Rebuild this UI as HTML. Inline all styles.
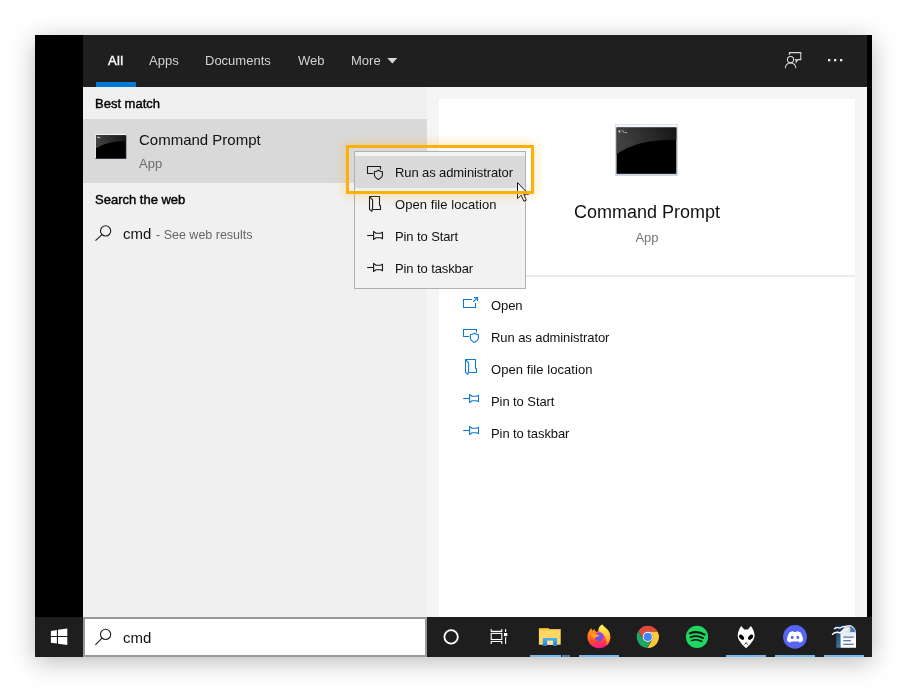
<!DOCTYPE html>
<html lang="en">
<head>
<meta charset="utf-8">
<title>Command Prompt - Run as administrator</title>
<style>
html,body{margin:0;padding:0;}
body{width:906px;height:692px;background:#fff;overflow:hidden;position:relative;font-family:"Liberation Sans",sans-serif;}
.abs{position:absolute;}
#win{position:absolute;left:35px;top:35px;width:837px;height:622px;background:#000;box-shadow:0 5px 24px rgba(0,0,0,.27);}
#header{position:absolute;left:83px;top:35px;width:784px;height:52px;background:#1f1f1f;}
#leftp{position:absolute;left:83px;top:87px;width:344px;height:530px;background:#f0f0f0;}
#rightbg{position:absolute;left:427px;top:87px;width:440px;height:530px;background:#f5f5f5;}
#card{position:absolute;left:439px;top:99px;width:416px;height:518px;background:#fff;}
#taskbar{position:absolute;left:35px;top:617px;width:837px;height:40px;background:#1e1e1e;}
#sbox{position:absolute;left:83px;top:617px;width:340px;height:36px;background:#fff;border:2px solid #999;}
.t{position:absolute;white-space:nowrap;line-height:20px;height:20px;will-change:transform;}
.nav{font-size:13px;color:#d2d2d2;top:51px;}
.sb{-webkit-text-stroke:0.4px currentColor;}
#selrow{position:absolute;left:83px;top:119px;width:344px;height:64px;background:#d9d9d9;}
#menu{position:absolute;left:354px;top:151px;width:170px;height:136px;background:#f2f2f2;border:1px solid #b0b0b0;}
#mhl{position:absolute;left:355px;top:156px;width:170px;height:31.6px;background:#dadada;}
.mi{font-size:13px;color:#111;left:395px;letter-spacing:-0.1px;}
.ai{font-size:13px;color:#111;left:491px;letter-spacing:-0.08px;}
#obox{position:absolute;left:346px;top:145px;width:182px;height:43px;border:3px solid #fdb00a;box-shadow:0 0 11px rgba(253,176,10,.40);}
.ul{position:absolute;top:655px;height:2px;background:#76b9ed;}
svg{position:absolute;overflow:visible;}
</style>
</head>
<body>
<div id="win"></div>
<div id="header"></div>
<div id="leftp"></div>
<div id="rightbg"></div>
<div id="card"></div>
<div id="taskbar"></div>
<div id="sbox"></div>

<!-- header tabs -->
<div class="t nav sb" id="n1" style="left:108px;color:#fff;letter-spacing:0.3px;">All</div>
<div class="abs" style="left:96px;top:82px;width:40px;height:5px;background:#0078d7;"></div>
<div class="t nav" id="n2" style="left:149px;">Apps</div>
<div class="t nav" id="n3" style="left:205px;">Documents</div>
<div class="t nav" id="n4" style="left:298px;">Web</div>
<div class="t nav" id="n5" style="left:351px;">More</div>
<svg style="left:387px;top:58px;" width="11" height="6" viewBox="0 0 11 6"><path d="M0.3,0 H10.3 L5.3,5.4 Z" fill="#d8d8d8"/></svg>

<!-- left panel -->
<div class="t sb" id="l1" style="left:95px;top:94px;font-size:13px;color:#000;">Best match</div>
<div id="selrow"></div>
<div class="t" id="l2" style="left:139px;top:130px;font-size:15px;color:#111;">Command Prompt</div>
<div class="t" id="l3" style="left:139px;top:154px;font-size:13px;color:#6d6d6d;">App</div>
<div class="t sb" id="l4" style="left:95px;top:190px;font-size:13px;color:#000;">Search the web</div>
<div class="t" id="l5" style="left:123px;top:224px;font-size:15px;color:#111;">cmd</div>
<div class="t" id="l6" style="left:156px;top:225px;font-size:12.5px;color:#666;">- See web results</div>

<!-- card -->
<div class="t" id="c1" style="left:439px;width:416px;text-align:center;top:199px;height:26px;line-height:26px;font-size:18px;color:#111;">Command Prompt</div>
<div class="t" id="c2" style="left:439px;width:416px;text-align:center;top:228px;font-size:13px;color:#767676;">App</div>
<div class="abs" style="left:439px;top:275px;width:416px;height:2px;background:#ececec;"></div>
<div class="t ai" id="a1" style="top:296px;">Open</div>
<div class="t ai" id="a2" style="top:328px;">Run as administrator</div>
<div class="t ai" id="a3" style="top:360px;letter-spacing:0.06px;">Open file location</div>
<div class="t ai" id="a4" style="top:392px;">Pin to Start</div>
<div class="t ai" id="a5" style="top:424px;">Pin to taskbar</div>

<!-- context menu -->
<div id="menu"></div>
<div id="mhl"></div>
<div class="t mi" id="m1" style="top:163px;">Run as administrator</div>
<div class="t mi" id="m2" style="top:195px;letter-spacing:0.06px;">Open file location</div>
<div class="t mi" id="m3" style="top:227px;">Pin to Start</div>
<div class="t mi" id="m4" style="top:259px;">Pin to taskbar</div>

<!-- taskbar -->
<div class="t" id="s1" style="left:123px;top:628px;font-size:15px;color:#111;">cmd</div>
<div class="ul" style="left:530px;width:31px;"></div>
<div class="ul" style="left:562px;width:8px;background:#4f7fa8;"></div>
<div class="ul" style="left:579px;width:40px;"></div>
<div class="ul" style="left:726px;width:40px;"></div>
<div class="ul" style="left:775px;width:40px;"></div>
<div class="ul" style="left:824px;width:40px;"></div>

<svg id="icons" style="left:0;top:0;" width="906" height="692" viewBox="0 0 906 692">
<defs>
<linearGradient id="gl" x1="0" y1="0.2" x2="1" y2="0"><stop offset="0" stop-color="#414141"/><stop offset="1" stop-color="#151515"/></linearGradient>
<linearGradient id="gblue" x1="0" y1="0" x2="0" y2="1"><stop offset="0" stop-color="#4fb2ef"/><stop offset="1" stop-color="#1c80d6"/></linearGradient>
<linearGradient id="gff" x1="0.35" y1="0" x2="0.5" y2="1"><stop offset="0" stop-color="#ffb52a"/><stop offset="0.35" stop-color="#ff8418"/><stop offset="0.72" stop-color="#ff4332"/><stop offset="0.92" stop-color="#ff1f7e"/><stop offset="1" stop-color="#f0158f"/></linearGradient>
<linearGradient id="gfl" x1="0.2" y1="0" x2="0.5" y2="1"><stop offset="0" stop-color="#fff45a"/><stop offset="0.55" stop-color="#ffd03a"/><stop offset="0.85" stop-color="#ffa325"/><stop offset="1" stop-color="#ff7a1c"/></linearGradient>
<radialGradient id="gpu" cx="0.42" cy="0.62" r="0.65"><stop offset="0" stop-color="#6458f2"/><stop offset="0.6" stop-color="#8446ee"/><stop offset="1" stop-color="#b03be6"/></radialGradient>
<linearGradient id="goo" x1="0" y1="0" x2="0" y2="1"><stop offset="0" stop-color="#10304f"/><stop offset="0.5" stop-color="#2a5680"/><stop offset="1" stop-color="#3f75a6"/></linearGradient>
<linearGradient id="gpage" x1="0" y1="0" x2="0" y2="1"><stop offset="0" stop-color="#bccbda"/><stop offset="0.35" stop-color="#e6ecf2"/><stop offset="0.7" stop-color="#fbfcfd"/><stop offset="1" stop-color="#ffffff"/></linearGradient>
</defs>

<!-- header icons -->
<g fill="none" stroke="#dcdcdc" stroke-width="1.05">
<circle cx="790.5" cy="59.5" r="3.1"/>
<path d="M785.3,68.2 A5.3,5.3 0 0 1 795.9,68.2"/>
<path d="M789.4,55 V52.6 H800.8 V59.6 H797.8 L796.2,62 V59.6 H794.9"/>
</g>
<g fill="#e8e8e8"><rect x="828" y="59" width="2.3" height="2.3"/><rect x="834" y="59" width="2.3" height="2.3"/><rect x="840" y="59" width="2.3" height="2.3"/></g>

<!-- small cmd icon -->
<rect x="95" y="134" width="31.4" height="25" fill="#474e5c"/>
<rect x="95" y="134" width="31.4" height="1.4" fill="#f4f6f9"/>
<rect x="95" y="134" width="1" height="24.4" fill="#e3e8f0"/>
<rect x="96" y="135.4" width="29.7" height="22.9" fill="#000"/>
<path d="M96,135.4 H125.5 V141 Q108,141 96,148.2 Z" fill="url(#gl)"/>
<rect x="97.3" y="136.8" width="1.6" height="1.2" fill="#ddd"/><rect x="99" y="137.4" width="1.8" height="0.8" fill="#bbb"/>

<!-- big cmd icon -->
<rect x="615.1" y="124.1" width="62.8" height="51.8" fill="#cdd5e2"/>
<rect x="615.8" y="124.6" width="61.4" height="2.6" fill="#f3f6fa"/>
<rect x="616.6" y="127.6" width="59.7" height="46.2" fill="#000"/>
<path d="M616.6,127.6 H676.3 V139.8 Q638,139 616.6,154.2 Z" fill="url(#gl)"/>
<g fill="#d8d8d8"><rect x="618.6" y="130.3" width="1.4" height="2.2"/><rect x="620.6" y="130.5" width="0.8" height="0.7"/><rect x="620.6" y="131.8" width="0.8" height="0.7"/><path d="M622,130.3 l0.8,0 l2,2.4 l-0.8,0 z"/><rect x="624.8" y="132.4" width="2.4" height="0.7"/></g>

<!-- search icons -->
<g fill="none" stroke="#1c1c1c" stroke-width="1.1">
<circle cx="105.6" cy="230.9" r="5.1"/><path d="M102,234.6 L95.5,240.7"/>
<circle cx="105.6" cy="634.4" r="5.1"/><path d="M102,638.1 L95.4,644.8"/>
</g>

<!-- action icons (blue) -->
<g stroke="#0f79d6">
<g fill="none" stroke-width="1.1"><path d="M472.2,299.5 H463.5 V307.5 H475.5 V303"/><path d="M473.2,301.9 L477.3,297.8"/><path d="M474,297.6 H477.5 V301.1" /></g>
<g fill="none" stroke-width="1.1"><path d="M476.5,332.6 V329.5 H463.5 V336.5 H469.2"/><path d="M470.4,334.7 Q472.6,334.5 474.4,333.2 Q476.2,334.5 478.4,334.7 V337.8 Q478.4,340.6 474.4,342.5 Q470.4,340.6 470.4,337.8 Z"/></g>
<g fill="none" stroke-width="1.1" stroke-linejoin="round"><path d="M465.5,359.5 H475.5 V368.2 L476.5,368.7 V372.5 H468.6"/><path d="M465.5,359.5 L468.6,362.8 V370.3 L467.9,374.4 L465.5,372.4 Z"/></g>
<g fill="none" stroke-width="1.1" stroke-linejoin="round"><path d="M463.2,398.5 H469.6"/><path d="M469.6,394.4 L472,396.2 H476.6 L478.5,395.2 V401.8 L476.6,400.8 H472 L469.6,402.6 Z"/></g>
<g fill="none" stroke-width="1.1" stroke-linejoin="round" transform="translate(0,32)"><path d="M463.2,398.5 H469.6"/><path d="M469.6,394.4 L472,396.2 H476.6 L478.5,395.2 V401.8 L476.6,400.8 H472 L469.6,402.6 Z"/></g>
</g>
<!-- menu icons (dark) -->
<g stroke="#1a1a1a" transform="translate(-96,-163)">
<g fill="none" stroke-width="1.1"><path d="M476.5,332.6 V329.5 H463.5 V336.5 H469.2"/><path d="M470.4,334.7 Q472.6,334.5 474.4,333.2 Q476.2,334.5 478.4,334.7 V337.8 Q478.4,340.6 474.4,342.5 Q470.4,340.6 470.4,337.8 Z"/></g>
<g fill="none" stroke-width="1.1" stroke-linejoin="round"><path d="M465.5,359.5 H475.5 V368.2 L476.5,368.7 V372.5 H468.6"/><path d="M465.5,359.5 L468.6,362.8 V370.3 L467.9,374.4 L465.5,372.4 Z"/></g>
<g fill="none" stroke-width="1.1" stroke-linejoin="round"><path d="M463.2,398.5 H469.6"/><path d="M469.6,394.4 L472,396.2 H476.6 L478.5,395.2 V401.8 L476.6,400.8 H472 L469.6,402.6 Z"/></g>
<g fill="none" stroke-width="1.1" stroke-linejoin="round" transform="translate(0,32)"><path d="M463.2,398.5 H469.6"/><path d="M469.6,394.4 L472,396.2 H476.6 L478.5,395.2 V401.8 L476.6,400.8 H472 L469.6,402.6 Z"/></g>
</g>

<!-- windows logo -->
<g fill="#fff">
<path d="M50.9,630.9 L56.9,630 V635.9 H50.9 Z"/>
<path d="M58,629.8 L67.3,628.5 V635.9 H58 Z"/>
<path d="M50.9,636.9 H56.9 V643.6 L50.9,642.7 Z"/>
<path d="M58,636.9 H67.3 V645.1 L58,643.8 Z"/>
</g>
<!-- cortana -->
<circle cx="451.1" cy="636.9" r="6.7" fill="none" stroke="#fff" stroke-width="1.8"/>
<!-- task view -->
<g fill="none" stroke="#fff" stroke-width="1.1">
<path d="M491.2,629 V631.4 H501.8 V629"/>
<rect x="491.2" y="633.4" width="10.6" height="6.1"/>
<path d="M491.2,644 V641.5 H501.8 V644"/>
<path d="M505.6,629 V631.9 M505.6,637.2 V644"/>
</g>
<rect x="504" y="633" width="3.3" height="3.1" fill="#fff"/>

<!-- explorer -->
<rect x="538.9" y="627.9" width="10.2" height="3" rx="0.6" fill="#e8a400"/>
<rect x="538.9" y="629.3" width="21.8" height="15.5" rx="0.5" fill="#ffd766"/>
<rect x="538.9" y="629.3" width="21.8" height="1.2" fill="#f3c64b"/>
<rect x="547.1" y="640.5" width="5.9" height="4.3" fill="#ffe59a"/>
<path d="M542.9,637.9 H557 V646 H553 V640.5 H547.1 V646 H542.9 Z" fill="url(#gblue)"/>

<!-- firefox -->
<path d="M602.2,624.6 C603.4,626.4 605.6,627.6 607.4,629.6 C609.4,631.8 610.4,634.6 610.3,637.4 C610.2,643.4 605.2,648.2 599,648.2 C592.6,648.2 587.4,643.2 587.4,637 C587.4,634.2 588.2,632 589.6,630.2 C590,629.4 590.8,628.9 591.3,628.6 C591.6,629.6 592.2,630.4 592.8,630.8 C593.2,630 593.8,629.4 594.4,629 C594.6,630 595.2,631 595.9,631.6 L597.3,632.2 C597.5,631.2 598.1,630.2 598.6,629.4 C598.8,627.6 600.2,626 602.2,624.6 Z" fill="url(#gff)"/>
<path d="M602.2,624.6 C603.4,626.4 605.6,627.6 607.4,629.6 C609.4,631.8 610.4,634.6 610.3,637.4 C610.2,640.4 609,643.2 606.8,645.2 C606.4,641.6 606,637.6 603.8,634.8 C602.2,632.8 600.2,632 598.6,629.4 C598.8,627.6 600.2,626 602.2,624.6 Z" fill="url(#gfl)"/>
<circle cx="599.2" cy="636.8" r="4.6" fill="url(#gpu)"/>
<path d="M590.6,634.2 C593,633.4 595.4,633.8 597.2,634.6 L599.6,635.2 C598.8,636.4 597.2,637 595.6,637.4 C594.6,637.6 594,638.4 593.8,639.2 C593,637 592,635.4 590.6,634.2 Z" fill="#ffa21f"/>

<!-- chrome -->
<path d="M638.45,630.91 A11.10,11.10 0 0 1 657.66,631.80 L647.80,631.80 A5.10,5.10 0 0 0 643.38,639.45 Z" fill="#dd4b3e"/><path d="M657.66,631.80 A11.10,11.10 0 0 1 647.29,647.99 L652.22,639.45 A5.10,5.10 0 0 0 647.80,631.80 Z" fill="#fcc934"/><path d="M647.29,647.99 A11.10,11.10 0 0 1 638.45,630.91 L643.38,639.45 A5.10,5.10 0 0 0 652.22,639.45 Z" fill="#1fa463"/><circle cx="647.8" cy="636.9" r="5.1" fill="#fff"/><circle cx="647.8" cy="636.9" r="4.1" fill="#4285f4"/>

<!-- spotify -->
<circle cx="697" cy="636.9" r="11.1" fill="#1ed760"/>
<g fill="none" stroke="#111" stroke-linecap="round">
<path d="M689.9,633.4 Q697.2,630.4 704.6,634.6" stroke-width="2.1"/>
<path d="M690.4,637.2 Q697,634.8 703.3,638.2" stroke-width="1.7"/>
<path d="M691.5,640.6 Q697,638.6 701.8,641.4" stroke-width="1.4"/>
</g>

<!-- foobar2000 -->
<path d="M741.2,626 L744.3,629.4 H747.8 L750.9,626 C752.6,628.4 754.8,632.4 754.6,636 C754.2,640.6 749.6,645 746.1,648.2 C742.6,645 738,640.6 737.7,636 C737.5,632.4 739.5,628.4 741.2,626 Z" fill="#fff"/>
<ellipse cx="741.6" cy="637.2" rx="3.1" ry="1.9" transform="rotate(48 741.6 637.2)" fill="#000"/>
<ellipse cx="750.6" cy="637.2" rx="3.1" ry="1.9" transform="rotate(-48 750.6 637.2)" fill="#000"/>
<path d="M744.6,644.6 L746.1,642.6 L747.6,644.6" fill="none" stroke="#222" stroke-width="0.9"/>

<!-- discord -->
<circle cx="795" cy="636.9" r="11.9" fill="#5865f2"/>
<path d="M789.6,632.3 C791,631.6 792.4,631.3 793.3,631.2 L793.8,632.1 C794.6,632 795.4,632 796.2,632.1 L796.7,631.2 C797.6,631.3 799,631.6 800.4,632.3 C802.4,635.2 803.3,638.4 802.9,641 C801.6,641.9 800.3,642.4 799.4,642.6 L798.5,641.2 C797.3,641.6 792.7,641.6 791.5,641.2 L790.6,642.6 C789.7,642.4 788.4,641.9 787.1,641 C786.7,638.4 787.6,635.2 789.6,632.3 Z" fill="#fff"/>
<ellipse cx="792.2" cy="637.4" rx="1.4" ry="1.55" fill="#5865f2"/><ellipse cx="797.8" cy="637.4" rx="1.4" ry="1.55" fill="#5865f2"/>

<!-- openoffice -->
<rect x="836.3" y="625.1" width="5" height="22.6" fill="url(#goo)"/>
<path d="M840.7,647.7 L840.4,633.6 C842,629.2 845,625.5 848,625.1 H850.6 C853.6,626.4 856,629.4 856,632.4 V647.7 Z" fill="url(#gpage)"/>
<path d="M849.8,626.2 C852.8,627 855.2,629.6 855.6,632.4 C853.8,631.8 851.6,631.8 849.9,632.4 C850.5,630.4 850.5,628.2 849.8,626.2 Z" fill="#4a7db0"/>
<path d="M836.3,625.1 H845.4 L841.2,630 H836.3 Z" fill="#112e4e"/>
<g fill="none" stroke="#fff" stroke-linecap="round" stroke-linejoin="round"><path d="M834.3,628.7 C836,627.4 838,627.2 839.8,628.2 C841.2,627 843.6,626.2 846.2,626.4" stroke-width="1.3"/><path d="M832.5,634.3 C834.6,632.2 837.4,631.8 839.9,632.9 C842.2,631.6 844.4,629.2 848.6,628.7" stroke-width="1.5"/></g>
<g stroke="#4a7099" stroke-width="1.2"><path d="M843.3,637.1 H853.7"/><path d="M843.3,640.7 H850.9"/><path d="M843.3,644.3 H853.7"/></g>
</svg>


<svg id="cursor" style="left:517px;top:182px;" width="13" height="20" viewBox="0 0 13 20"><path d="M0.5,0.6 V16.6 L4.2,13.1 L6.9,19.2 L9.3,18.2 L6.7,12.2 H11.6 Z" fill="#fff" stroke="#101028" stroke-width="1" stroke-linejoin="miter"/></svg>

<div id="obox"></div>
</body>
</html>
